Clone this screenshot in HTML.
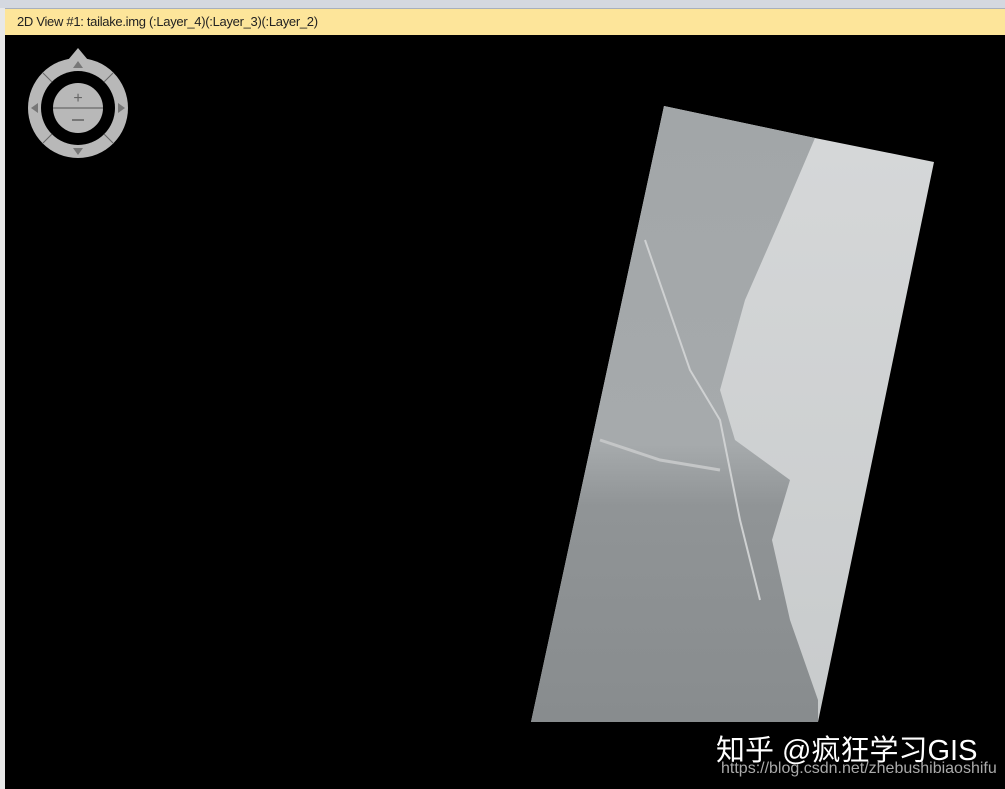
<!DOCTYPE html>
<html><head><meta charset="utf-8"><style>
html,body{margin:0;padding:0;width:1005px;height:789px;overflow:hidden;background:#000}
.top{position:absolute;left:0;top:0;width:1005px;height:8px;background:#d4d8e0;border-bottom:1px solid #a8b0bc}
.left{position:absolute;left:0;top:8px;width:5px;height:781px;background:#e8e8e8}
.title{position:absolute;left:5px;top:9px;width:1000px;height:26px;background:#fde59a;font:13px "Liberation Sans",sans-serif;color:#222;line-height:26px;padding-left:12px;box-sizing:border-box;letter-spacing:-0.3px}
.wm{position:absolute;left:716px;top:727px;font:29px "Liberation Sans","Noto Sans CJK SC",sans-serif;color:#fff}
.url{position:absolute;left:721px;top:760px;font:16px "Liberation Sans",sans-serif;color:#aaa}
</style></head><body>
<div class="top"></div><div class="left"></div>
<div class="title">2D View #1: tailake.img (:Layer_4)(:Layer_3)(:Layer_2)</div>
<svg style="position:absolute;left:0;top:0" width="1005" height="789">
<defs>
<linearGradient id="lk" x1="0" y1="0" x2="0" y2="1"><stop offset="0" stop-color="#d6d8d9"/><stop offset="1" stop-color="#c8cbcc"/></linearGradient>
<linearGradient id="ld" x1="0" y1="0" x2="0" y2="1"><stop offset="0" stop-color="#a2a6a8"/><stop offset="0.55" stop-color="#a6aaac"/><stop offset="0.65" stop-color="#909496"/><stop offset="1" stop-color="#888c8e"/></linearGradient>
</defs>
<polygon points="664,106 815,138 934,162 818,722 531,722" fill="url(#lk)"/>
<polygon points="664,106 815,138 780,220 745,300 720,390 735,440 790,480 772,540 790,620 818,700 818,722 531,722" fill="url(#ld)"/>
<polyline points="645,240 690,370 720,420 740,520 760,600" fill="none" stroke="#cfd1d2" stroke-width="2"/>
<polyline points="600,440 660,460 720,470" fill="none" stroke="#c4c6c7" stroke-width="3"/>
<g transform="translate(78,108)">
<polygon points="0,-60 -10,-48 10,-48" fill="#b8b8b8"/>
<circle r="50" fill="#b8b8b8"/>
<circle r="37" fill="#000"/>
<circle r="25" fill="#b8b8b8"/>
<line x1="-25" y1="0" x2="25" y2="0" stroke="#555" stroke-width="1"/>
<text x="0" y="-5" text-anchor="middle" font-family="Liberation Sans" font-size="16" fill="#666">+</text>
<rect x="-6" y="11" width="12" height="2" fill="#777"/>
<polygon points="0,-47 -5,-40 5,-40" fill="#777"/>
<polygon points="0,47 -5,40 5,40" fill="#777"/>
<polygon points="-47,0 -40,-5 -40,5" fill="#777"/>
<polygon points="47,0 40,-5 40,5" fill="#777"/>
<g stroke="#666" stroke-width="1"><line x1="-26" y1="-26" x2="-35" y2="-35"/><line x1="26" y1="-26" x2="35" y2="-35"/><line x1="-26" y1="26" x2="-35" y2="35"/><line x1="26" y1="26" x2="35" y2="35"/></g>
</g>
</svg>
<div class="wm">知乎 @疯狂学习GIS</div>
<div class="url">https://blog.csdn.net/zhebushibiaoshifu</div>
</body></html>
